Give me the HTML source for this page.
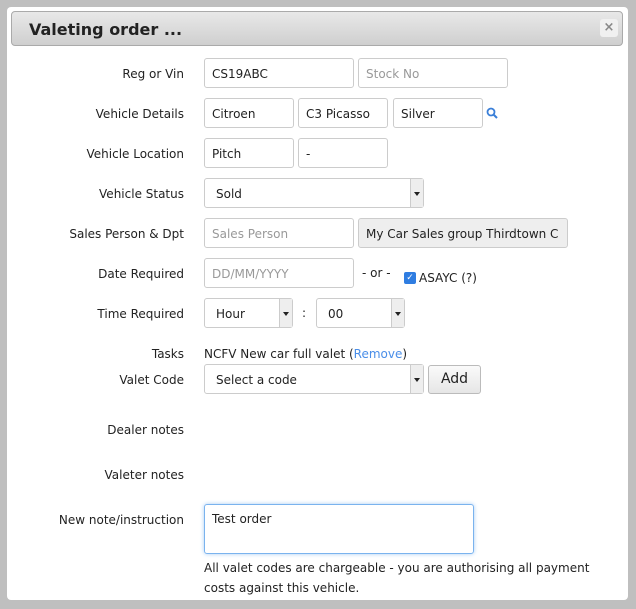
<!DOCTYPE html>
<html><head><style>
body{margin:0;width:636px;height:609px;background:#bfbfbf;font-family:"DejaVu Sans","Liberation Sans",sans-serif;font-size:12px;color:#222;position:relative;overflow:hidden}
.dlg{position:absolute;left:7px;top:7px;width:621px;height:593px;background:#fff;border-radius:4px}
.tb{position:absolute;left:11px;top:11px;width:610px;height:33px;border:1px solid #aaa;border-radius:4px;background:linear-gradient(#e8e8e8,#cfcfcf)}
.tb b{position:absolute;left:17px;top:8px;font-size:16px;color:#222}
.x{position:absolute;right:4px;top:7px;width:18px;height:18px;background:#f0f0f0;border-radius:3px;color:#888;font-size:13px;text-align:center;line-height:18px;font-weight:bold}
.l{position:absolute;right:452px;text-align:right;white-space:nowrap}
.i{position:absolute;box-sizing:border-box;height:30px;border:1px solid #ccc;border-radius:3px;padding-left:7px;line-height:30px;white-space:nowrap;overflow:hidden}
.ph{color:#999}
.s{position:absolute;box-sizing:border-box;height:30px;border:1px solid #ccc;border-radius:3px;padding-left:11px;line-height:30px}
.s:after{content:"";position:absolute;right:0;top:0;width:12px;height:28px;border-left:1px solid #ccc;background:#eee}
.s i{position:absolute;right:3px;top:13px;border-left:3px solid transparent;border-right:3px solid transparent;border-top:4px solid #222;z-index:2}
.t{position:absolute;white-space:nowrap}
</style></head><body>
<div class="dlg"></div>
<div class="tb"><b>Valeting order ...</b><div class="x">×</div></div>

<div class="l" style="top:67px">Reg or Vin</div>
<div class="i" style="left:204px;top:58px;width:150px">CS19ABC</div>
<div class="i ph" style="left:358px;top:58px;width:150px">Stock No</div>

<div class="l" style="top:107px">Vehicle Details</div>
<div class="i" style="left:204px;top:98px;width:90px">Citroen</div>
<div class="i" style="left:298px;top:98px;width:90px">C3 Picasso</div>
<div class="i" style="left:393px;top:98px;width:90px">Silver</div>
<svg style="position:absolute;left:486px;top:107px" width="12" height="12"><circle cx="5" cy="5" r="3.5" fill="none" stroke="#3a7fd8" stroke-width="1.8"/><line x1="7.5" y1="7.5" x2="11" y2="11" stroke="#3a7fd8" stroke-width="2"/></svg>

<div class="l" style="top:147px">Vehicle Location</div>
<div class="i" style="left:204px;top:138px;width:90px">Pitch</div>
<div class="i" style="left:298px;top:138px;width:90px">-</div>

<div class="l" style="top:187px">Vehicle Status</div>
<div class="s" style="left:204px;top:178px;width:220px">Sold<i></i></div>

<div class="l" style="top:227px">Sales Person &amp; Dpt</div>
<div class="i ph" style="left:204px;top:218px;width:150px">Sales Person</div>
<div class="i" style="left:358px;top:218px;width:210px;background:#eee">My Car Sales group Thirdtown C</div>

<div class="l" style="top:267px">Date Required</div>
<div class="i ph" style="left:204px;top:258px;width:150px">DD/MM/YYYY</div>
<div class="t" style="left:362px;top:266px">- or -</div>
<div style="position:absolute;left:404px;top:272px;width:12px;height:12px;background:#2f7de1;border-radius:2px;color:#fff;font-size:9px;line-height:12px;text-align:center">✓</div>
<div class="t" style="left:419px;top:271px">ASAYC (?)</div>

<div class="l" style="top:307px">Time Required</div>
<div class="s" style="left:204px;top:298px;width:89px">Hour<i></i></div>
<div class="t" style="left:302px;top:306px">:</div>
<div class="s" style="left:316px;top:298px;width:89px">00<i></i></div>

<div class="l" style="top:347px">Tasks</div>
<div class="t" style="left:204px;top:347px">NCFV New car full valet (<span style="color:#4a8ee8">Remove</span>)</div>
<div class="l" style="top:373px">Valet Code</div>
<div class="s" style="left:204px;top:364px;width:220px">Select a code<i></i></div>
<div style="position:absolute;left:428px;top:365px;width:53px;height:29px;box-sizing:border-box;border:1px solid #bbb;border-radius:3px;background:linear-gradient(#fafafa,#e6e6e6);text-align:center;line-height:27px;font-size:14px">Add</div>

<div class="l" style="top:423px">Dealer notes</div>
<div class="l" style="top:468px">Valeter notes</div>
<div class="l" style="top:513px">New note/instruction</div>
<div style="position:absolute;left:204px;top:504px;width:270px;height:50px;box-sizing:border-box;border:1px solid #7ab3ee;border-radius:3px;box-shadow:0 0 4px #a8cdf5;padding:7px 7px">Test order</div>
<div class="t" style="left:204px;top:558px;line-height:20px">All valet codes are chargeable - you are authorising all payment<br>costs against this vehicle.</div>
</body></html>
